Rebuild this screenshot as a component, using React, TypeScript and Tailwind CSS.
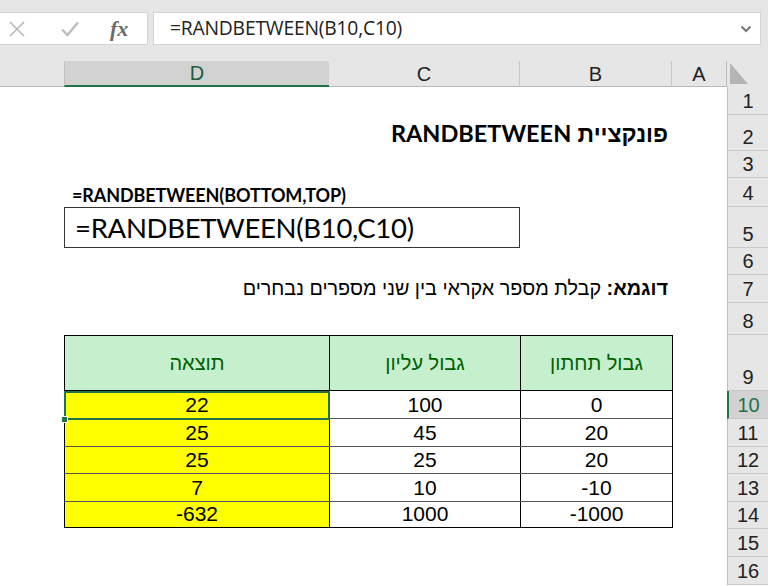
import React from 'react';

// row heights of rows 1..16, written out so Tailwind sees every class
const rowClasses = [
  'h-[28px]', 'h-[36px]', 'h-[27px]', 'h-[29px]', 'h-[41px]', 'h-[27px]', 'h-[28px]', 'h-[32px]',
  'h-[56px]', 'h-[28px]', 'h-[28px]', 'h-[27px]', 'h-[28px]', 'h-[27px]', 'h-[28px]', 'h-[28px]',
];

const dataRowClasses = ['h-[28px]', 'h-[28px]', 'h-[27px]', 'h-[28px]', 'h-[25px]'];

const data = [
  ['22', '100', '0'],
  ['25', '45', '20'],
  ['25', '25', '20'],
  ['7', '10', '-10'],
  ['-632', '1000', '-1000'],
];

function FormulaBar() {
  return (
    <div className="h-[61px] bg-[#e6e6e6] pt-[12px] flex gap-[5px]">
      <div className="w-[148px] h-[33px] bg-white border border-[#d4d4d4] border-l-0 flex items-center">
        <svg width="18" height="18" viewBox="0 0 18 18" className="ml-[8px]">
          <path d="M2 2 L16 16 M16 2 L2 16" stroke="#b8b8b8" strokeWidth="1.6" fill="none" />
        </svg>
        <svg width="20" height="18" viewBox="0 0 20 18" className="ml-[34px]">
          <path d="M2 9.5 L7.5 15 L18 2.5" stroke="#bdbdbd" strokeWidth="2.4" fill="none" />
        </svg>
        <span className="ml-[30px] text-[22px] italic font-bold text-[#6a6a6a] font-['Liberation_Serif',serif] leading-none">
          fx
        </span>
      </div>
      <div className="w-[608px] h-[33px] bg-white border border-[#d4d4d4] flex items-center justify-between pl-[16px] pr-[8px]">
        <span className="text-[19.3px] text-[#222] font-['Open_Sans',sans-serif] tracking-[-0.2px]">
          =RANDBETWEEN(B10,C10)
        </span>
        <svg width="12" height="8" viewBox="0 0 12 8">
          <path d="M1.5 1.5 L6 6 L10.5 1.5" stroke="#777" strokeWidth="2" fill="none" />
        </svg>
      </div>
    </div>
  );
}

function ColumnHeaders() {
  return (
    <div className="h-[26px] flex bg-[#e6e6e6] text-[20px] text-[#222] font-['Liberation_Sans',sans-serif]">
      <div className="w-[64px] border-b border-[#b8b8b8]" />
      <div className="w-[265px] bg-[#d2d2d2] border-b-2 border-[#217346] border-l border-l-[#c0c0c0] flex items-center justify-center text-[#215a3c]">
        D
      </div>
      <div className="w-[191px] border-b border-[#b8b8b8] border-r border-r-[#c8c8c8] flex items-center justify-center">C</div>
      <div className="w-[152px] border-b border-[#b8b8b8] border-r border-r-[#c8c8c8] flex items-center justify-center">B</div>
      <div className="w-[55px] border-b border-[#b8b8b8] border-r border-r-[#bdbdbd] flex items-center justify-center">A</div>
      <div className="w-[41px] relative">
        <svg width="41" height="26" viewBox="0 0 41 26" className="absolute left-0 top-0">
          <path d="M3 2 L3 23 L21 23 Z" fill="#b4b4b4" />
        </svg>
      </div>
    </div>
  );
}

function RowHeaders() {
  return (
    <div className="w-[41px] bg-[#e6e6e6] border-l border-[#bdbdbd] font-['Liberation_Sans',sans-serif] text-[20px] leading-[24px]">
      {rowClasses.map((h, i) => (
        <div
          key={i}
          className={
            i === 9
              ? `${h} flex items-end justify-center pb-[1px] border-b border-[#c8c8c8] bg-[#d2d2d2] text-[#217346] border-l-2 border-l-[#217346] -ml-[1px]`
              : `${h} flex items-end justify-center pb-[1px] border-b border-[#c8c8c8] text-[#222]`
          }
        >
          {i + 1}
        </div>
      ))}
    </div>
  );
}

function ResultTable() {
  return (
    <div className="ml-[64px] w-[609px] border border-black relative font-['Liberation_Sans',sans-serif]">
      <div className="h-[55px] flex bg-[#c6efce] text-[#006100] text-[20px] border-b border-black">
        <div dir="rtl" className="w-[265px] border-r border-black flex items-center justify-center">תוצאה</div>
        <div dir="rtl" className="w-[191px] border-r border-black flex items-center justify-center">גבול עליון</div>
        <div dir="rtl" className="flex-1 flex items-center justify-center">גבול תחתון</div>
      </div>
      {data.map((r, i) => (
        <div
          key={i}
          className={`${dataRowClasses[i]} flex text-[21px] text-black leading-[24px] ${i < 4 ? 'border-b border-[#555]' : ''}`}
        >
          <div className="w-[265px] bg-[#ffff00] border-r border-black flex items-end justify-center pb-[1px]">{r[0]}</div>
          <div className="w-[191px] border-r border-black flex items-end justify-center pb-[1px]">{r[1]}</div>
          <div className="flex-1 flex items-end justify-center pb-[1px]">{r[2]}</div>
        </div>
      ))}
      {/* active cell D10 */}
      <div className="absolute left-[-1px] top-[55px] w-[266px] h-[29px] border-2 border-[#217346]" />
      <div className="absolute left-[-4px] top-[80px] w-[7px] h-[7px] bg-[#217346] border border-white" />
    </div>
  );
}

function Sheet() {
  return (
    <div className="w-[727px] bg-white flex flex-col">
      <div className="h-[28px]" />
      <div className="h-[36px] flex items-end justify-end pr-[59px] pb-[5px]">
        <span dir="rtl" className="text-[23px] font-bold text-black leading-none font-['Liberation_Sans',sans-serif]">
          פונקציית <span className="font-['Lato',sans-serif] text-[23.5px]">RANDBETWEEN</span>
        </span>
      </div>
      <div className="h-[27px]" />
      <div className="h-[29px] flex items-end pl-[72px] pb-[3px]">
        <span className="text-[18px] font-bold text-black leading-none tracking-[-0.1px] font-['Lato',sans-serif]">
          =RANDBETWEEN(BOTTOM,TOP)
        </span>
      </div>
      <div className="h-[41px] flex">
        <div className="ml-[64px] w-[456px] border border-[#333] flex items-center pl-[10px]">
          <span className="text-[27.5px] text-black leading-none tracking-[-0.3px] font-['Lato',sans-serif]">
            =RANDBETWEEN(B10,C10)
          </span>
        </div>
      </div>
      <div className="h-[27px]" />
      <div className="h-[28px] flex items-end justify-end pr-[59px] pb-[4px]">
        <span dir="rtl" className="text-[19.8px] text-black leading-none font-['Liberation_Sans',sans-serif]">
          <b>דוגמא:</b> קבלת מספר אקראי בין שני מספרים נבחרים
        </span>
      </div>
      <div className="h-[32px]" />
      <ResultTable />
    </div>
  );
}

export default function App() {
  return (
    <div className="w-[768px] h-[586px] overflow-hidden bg-white">
      <FormulaBar />
      <ColumnHeaders />
      <div className="flex">
        <Sheet />
        <RowHeaders />
      </div>
    </div>
  );
}
